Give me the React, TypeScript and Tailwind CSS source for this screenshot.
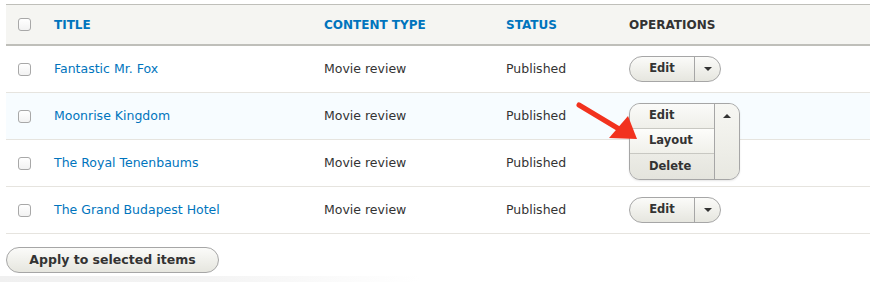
import React from "react";

const font = { fontFamily: '"DejaVu Sans", Verdana, sans-serif' };

const rows = [
  "Fantastic Mr. Fox",
  "Moonrise Kingdom",
  "The Royal Tenenbaums",
  "The Grand Budapest Hotel",
];

function Checkbox() {
  return (
    <span className="block w-[13px] h-[13px] rounded-[3px] border border-[#a8a8a8] bg-linear-to-b from-white to-[#f2f2f2]" />
  );
}

function DropButton() {
  return (
    <div className="flex w-[92px] h-[26px] rounded-full border border-[#a6a6a6] bg-linear-to-b from-[#fbfbf9] to-[#e6e6df] overflow-hidden">
      <div className="w-[65px] flex items-center justify-center text-[11.5px] font-bold text-[#333] border-r border-[#a6a6a6]">
        Edit
      </div>
      <div className="flex-1 flex items-center justify-center">
        <span className="block w-0 h-0 border-l-[4px] border-r-[4px] border-t-[4px] border-l-transparent border-r-transparent border-t-[#333]" />
      </div>
    </div>
  );
}

function OpenDropButton() {
  return (
    <div className="absolute left-0 top-[10px] z-20 flex w-[111px] h-[77px] rounded-[11px] border border-[#a6a6a6] bg-[#f1f1ec] overflow-hidden shadow-[0_1px_2px_rgba(0,0,0,0.1)]">
      <div className="w-[85px] flex flex-col border-r border-[#a6a6a6] text-[11.5px] font-bold text-[#333]">
        <div className="h-[25px] flex items-center pl-[19px] bg-linear-to-b from-[#fbfbf9] to-[#efefe9] border-b border-[#c8c8c2]">
          Edit
        </div>
        <div className="h-[25px] flex items-center pl-[19px] bg-linear-to-b from-[#fdfdfb] to-[#f0f0ea] border-b border-[#c8c8c2]">
          Layout
        </div>
        <div className="flex-1 flex items-center pl-[19px] bg-linear-to-b from-[#ecece6] to-[#e4e4dd]">
          Delete
        </div>
      </div>
      <div className="flex-1 flex justify-center pt-[10px] bg-linear-to-b from-[#f7f7f3] to-[#e8e8e1]">
        <span className="block w-0 h-0 border-l-[4px] border-r-[4px] border-b-[4px] border-l-transparent border-r-transparent border-b-[#333]" />
      </div>
    </div>
  );
}

export default function App() {
  return (
    <div className="relative w-[884px] h-[282px] bg-white overflow-hidden" style={font}>
      <div className="pt-[4px] px-[6px] w-[876px]">
        <div className="grid grid-cols-[48px_270px_182px_123px_1fr] h-[42px] items-center bg-[#f5f5f2] border-t border-b-2 border-[#bfbfba] text-[12px] font-bold uppercase">
          <div className="pl-[12px]"><Checkbox /></div>
          <div className="text-[#0074bd]">Title</div>
          <div className="text-[#0074bd]">Content type</div>
          <div className="text-[#0074bd]">Status</div>
          <div className="text-[#333]">Operations</div>
        </div>
        {rows.map((t, i) => (
          <div
            key={t}
            className={
              "grid grid-cols-[48px_270px_182px_123px_1fr] h-[47px] items-center border-b border-[#e6e4df] text-[12.5px] " +
              (i === 1 ? "bg-[#f7fcff]" : "bg-white")
            }
          >
            <div className="pl-[12px]"><Checkbox /></div>
            <div className="text-[#0074bd]">{t}</div>
            <div className="text-[#333]">Movie review</div>
            <div className="text-[#333]">Published</div>
            <div className="relative h-full flex items-center">
              {i === 1 ? <OpenDropButton /> : i === 2 ? null : <DropButton />}
            </div>
          </div>
        ))}
        <div className="mt-[13px]">
          <button className="h-[26px] w-[213px] rounded-full border border-[#a6a6a6] bg-linear-to-b from-[#fbfbf9] to-[#e6e6df] text-[12.5px] font-bold text-[#333]" style={font}>
            Apply to selected items
          </button>
        </div>
      </div>
      <div className="absolute left-0 bottom-0 w-[420px] h-[6px] bg-linear-to-r from-[#f0f0f0] via-[#f4f4f4] to-white" />
      <svg className="absolute left-0 top-0 z-30 pointer-events-none" width="884" height="282">
        <line x1="579" y1="105" x2="619" y2="129" stroke="#f2321e" strokeWidth="5" strokeLinecap="round" />
        <polygon points="637,139 609,138 628,116" fill="#f2321e" />
      </svg>
    </div>
  );
}
